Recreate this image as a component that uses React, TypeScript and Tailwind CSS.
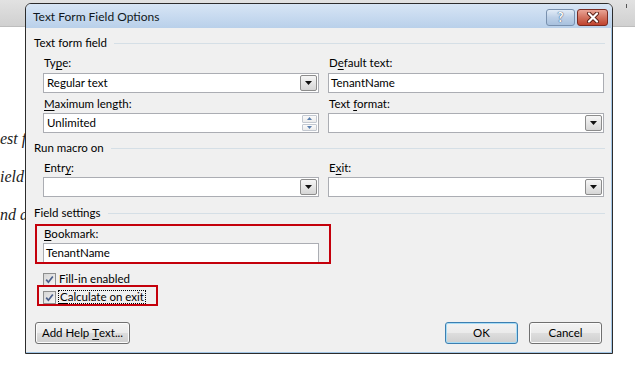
import React from "react";

const U = ({ children }: { children: React.ReactNode }) => (
  <span className="underline underline-offset-[2px] decoration-1">{children}</span>
);

function DropBtn() {
  return (
    <div className="w-[17px] border border-[#8c8c8c] rounded-[2px] bg-[linear-gradient(#f6f6f6,#e6e6e6_50%,#d6d6d6)] flex items-center justify-center">
      <svg width="7" height="4" viewBox="0 0 7 4">
        <polygon points="0,0 7,0 3.5,4" fill="#111" />
      </svg>
    </div>
  );
}

function Combo({ text }: { text?: string }) {
  return (
    <div className="h-[20px] border border-[#abadb3] bg-white flex items-stretch p-px">
      <div className="flex-1 pl-[2px] flex items-center leading-none">{text}</div>
      <DropBtn />
    </div>
  );
}

function TextBox({ text }: { text?: string }) {
  return (
    <div className="h-[20px] border border-[#abadb3] bg-white flex items-center pl-[2px] leading-none">{text}</div>
  );
}

function Spin() {
  return (
    <div className="h-[20px] border border-[#abadb3] bg-white flex items-stretch p-px">
      <div className="flex-1 pl-[2px] flex items-center leading-none">Unlimited</div>
      <div className="w-[15px] flex flex-col gap-px">
        <div className="flex-1 border border-[#c3c8d0] rounded-[1px] bg-[linear-gradient(#fbfbfb,#ececec)] flex items-center justify-center">
          <svg width="5" height="3" viewBox="0 0 5 3"><polygon points="0,3 5,3 2.5,0" fill="#5b7fae" /></svg>
        </div>
        <div className="flex-1 border border-[#c3c8d0] rounded-[1px] bg-[linear-gradient(#fbfbfb,#ececec)] flex items-center justify-center">
          <svg width="5" height="3" viewBox="0 0 5 3"><polygon points="0,0 5,0 2.5,3" fill="#5b7fae" /></svg>
        </div>
      </div>
    </div>
  );
}

function Label({ children }: { children: React.ReactNode }) {
  return <div className="h-[14px] leading-[14px] pl-[1px]">{children}</div>;
}

function Header({ children }: { children: React.ReactNode }) {
  return (
    <div className="h-[14px] flex items-center pl-[8px] pr-[6px]">
      <span className="leading-[14px]">{children}</span>
      <div className="flex-1 h-px bg-[#d5dfe6] ml-[7px]" />
    </div>
  );
}

function Check() {
  return (
    <div className="w-[13px] h-[13px] border border-[#8e8f8f] bg-[linear-gradient(135deg,#d6d6d6,#f4f4f4)] flex items-center justify-center">
      <svg width="11" height="11" viewBox="0 0 11 11">
        <path d="M2.2 5.6 L4.4 8.2 L8.8 2.4" fill="none" stroke="#4b5f8a" strokeWidth="1.7" />
      </svg>
    </div>
  );
}

function Btn({ children, def, w }: { children: React.ReactNode; def?: boolean; w: string }) {
  return (
    <div
      className={
        "h-[22px] rounded-[3px] flex items-center justify-center leading-none whitespace-pre bg-[linear-gradient(#f3f3f3,#ebebeb_48%,#dddddd_52%,#cfcfcf)] " +
        w +
        (def ? " border border-[#3c7fb1] shadow-[inset_0_0_0_1px_#a8dcf5]" : " border border-[#707070] shadow-[inset_0_0_0_1px_#fbfbfb]")
      }
    >
      {children}
    </div>
  );
}

export default function App() {
  return (
    <div className="relative w-[635px] h-[377px] overflow-hidden bg-white font-['Lato',sans-serif] text-[11.5px] text-black">
      {/* document behind */}
      <div className="h-[27px] bg-[linear-gradient(#e2e2e2,#d0d0d0)] border-b border-[#bdbdbd] flex justify-end">
        <div className="w-px h-[4px] bg-[#555] mt-[4px] mr-[8px]" />
      </div>
      <div className="w-[25px] overflow-hidden whitespace-nowrap pt-[93px] font-['Liberation_Serif',serif] italic text-[16px] leading-[38px] text-[#222]">
        <div>est f</div>
        <div>ield</div>
        <div>nd a</div>
      </div>

      {/* dialog */}
      <div className="absolute left-[25px] top-[3px] w-[588px] h-[351px] border border-[#2c2c2c] rounded-t-[6px] flex flex-col overflow-hidden">
        <div className="h-[24px] bg-[linear-gradient(#d7e5f5,#b9d0ea)] flex items-start pl-[7px] pr-[4px]">
          <span className="self-center text-[12px] text-[#101820] leading-none mt-[1px]">Text Form Field Options</span>
          <div className="ml-auto mt-[5px] flex gap-[2px]">
            <div className="w-[29px] h-[17px] rounded-[3px] border border-[#7890ae] bg-[linear-gradient(#e2ecf7,#bdd0e7_50%,#a8c1de)] flex items-center justify-center">
              <span className="text-white font-bold text-[13px] leading-none [text-shadow:0_0_1px_#2e4a70,0_0_1px_#2e4a70]">?</span>
            </div>
            <div className="w-[31px] h-[17px] rounded-[3px] border border-[#7a2b22] bg-[linear-gradient(#eaa496,#d2725f_50%,#c0432f)] flex items-center justify-center">
              <svg width="14" height="11" viewBox="0 0 14 11">
                <path d="M3 1.5 L11 9.5 M11 1.5 L3 9.5" stroke="#5b1e16" strokeWidth="4" strokeLinecap="round" />
                <path d="M3 1.5 L11 9.5 M11 1.5 L3 9.5" stroke="#ffffff" strokeWidth="2.2" strokeLinecap="round" />
              </svg>
            </div>
          </div>
        </div>

        <div className="relative flex-1 bg-[#f0f0f0] border-r border-b border-[#a3c6e6] pt-[8px]">
          <Header>Text form field</Header>
          <div className="grid grid-cols-[276px_276px] gap-x-[9px] pl-[17px] mt-[6px]">
            <Label>
              Ty<U>p</U>e:
            </Label>
            <Label>
              D<U>e</U>fault text:
            </Label>
            <div className="mt-[3px]">
              <Combo text="Regular text" />
            </div>
            <div className="mt-[3px]">
              <TextBox text="TenantName" />
            </div>
            <div className="mt-[4px]">
              <Label>
                <U>M</U>aximum length:
              </Label>
            </div>
            <div className="mt-[4px]">
              <Label>
                Text <U>f</U>ormat:
              </Label>
            </div>
            <div className="mt-[2px]">
              <Spin />
            </div>
            <div className="mt-[2px]">
              <Combo />
            </div>
          </div>

          <div className="mt-[8px]">
            <Header>Run macro on</Header>
          </div>
          <div className="grid grid-cols-[276px_276px] gap-x-[9px] pl-[17px] mt-[6px]">
            <Label>
              Entr<U>y</U>:
            </Label>
            <Label>
              E<U>x</U>it:
            </Label>
            <div className="mt-[2px]">
              <Combo />
            </div>
            <div className="mt-[2px]">
              <Combo />
            </div>
          </div>

          <div className="mt-[9px]">
            <Header>Field settings</Header>
          </div>
          <div className="pl-[17px] w-[293px] mt-[7px]">
            <Label>
              <U>B</U>ookmark:
            </Label>
            <div className="mt-[2px]">
              <TextBox text="TenantName" />
            </div>
          </div>
          <div className="pl-[17px] mt-[9px] h-[14px] flex items-center gap-[3px]">
            <Check />
            <span className="leading-[14px]">
              Fill-in e<U>n</U>abled
            </span>
          </div>
          <div className="pl-[17px] mt-[4px] h-[14px] flex items-center gap-[2px]">
            <Check />
            <span className="leading-[12px] border border-dotted border-black px-px">
              <U>C</U>alculate on exit
            </span>
          </div>

          <div className="mt-[18px] flex items-center pl-[9px] pr-[9px]">
            <Btn w="w-[95px]">
              {"Add Help "}
              <U>T</U>
              {"ext..."}
            </Btn>
            <div className="ml-auto flex gap-[11px]">
              <Btn w="w-[73px]" def>
                OK
              </Btn>
              <Btn w="w-[73px]">Cancel</Btn>
            </div>
          </div>

          {/* red annotation boxes */}
          <div className="absolute left-[9px] top-[196px] w-[296px] h-[40px] border-2 border-[#c4000b]" />
          <div className="absolute left-[11px] top-[257px] w-[121px] h-[21px] border-2 border-[#c4000b]" />
        </div>
      </div>
    </div>
  );
}
